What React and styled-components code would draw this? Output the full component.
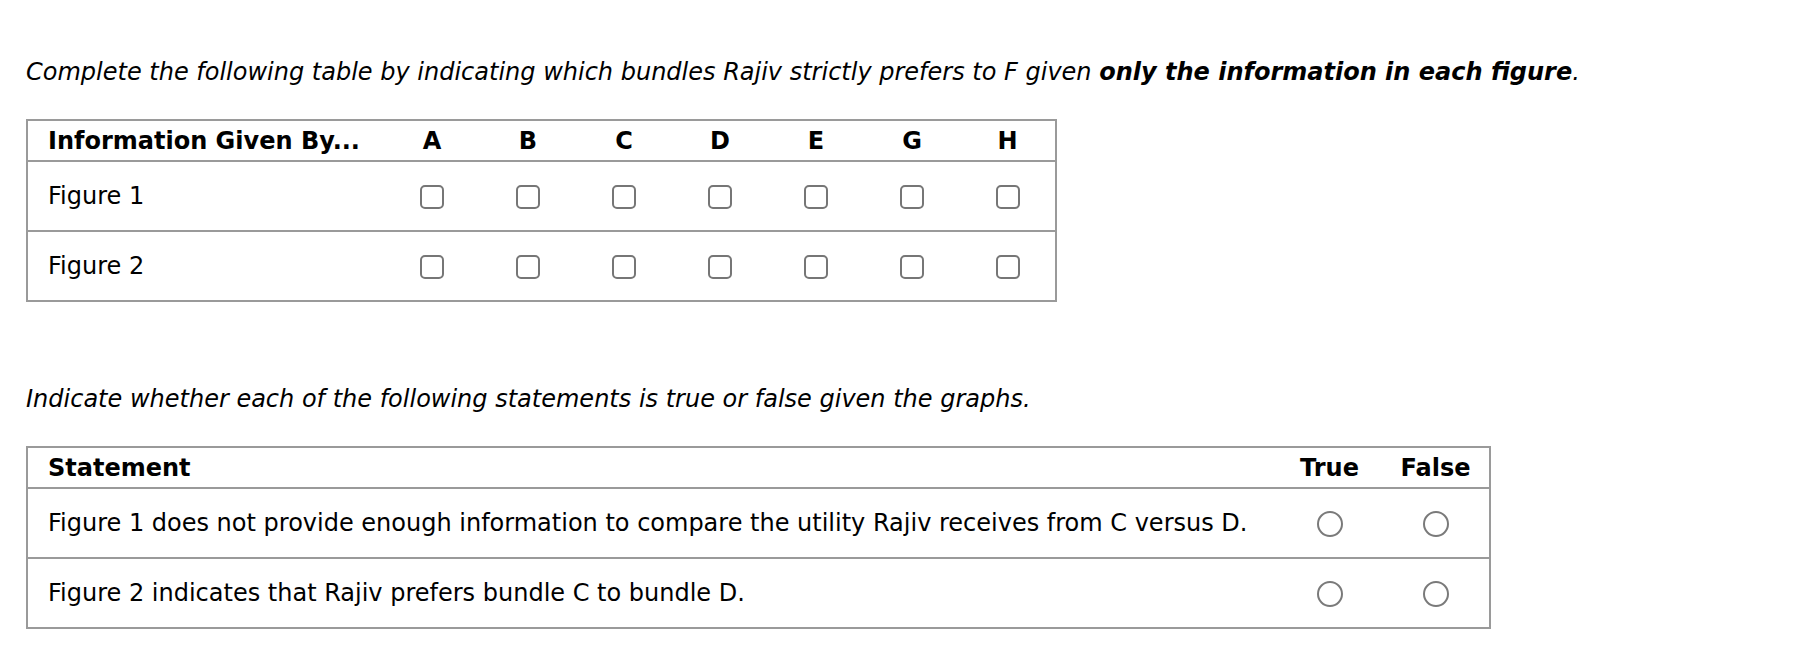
import styled, { createGlobalStyle } from "styled-components";

const GlobalStyle = createGlobalStyle`
  body {
    margin: 0;
    background: #ffffff;
    font-family: "DejaVu Sans", Verdana, sans-serif;
    color: #000000;
  }
`;

const bundles = ["A", "B", "C", "D", "E", "G", "H"];
const figures = ["Figure 1", "Figure 2"];
const statements = [
  "Figure 1 does not provide enough information to compare the utility Rajiv receives from C versus D.",
  "Figure 2 indicates that Rajiv prefers bundle C to bundle D.",
];

const App = () => {
  return (
    <Page>
      <GlobalStyle />
      <Prompt>
        Complete the following table by indicating which bundles Rajiv strictly
        prefers to F given <strong>only the information in each figure</strong>.
      </Prompt>
      <Table>
        <thead>
          <tr>
            <HeadCell $width={357}>Information Given By...</HeadCell>
            {bundles.map((b) => (
              <HeadCell key={b} $center $width={96}>
                {b}
              </HeadCell>
            ))}
          </tr>
        </thead>
        <tbody>
          {figures.map((f) => (
            <tr key={f}>
              <Cell>{f}</Cell>
              {bundles.map((b) => (
                <Cell key={b} $center>
                  <Checkbox type="checkbox" aria-label={`${f} ${b}`} />
                </Cell>
              ))}
            </tr>
          ))}
        </tbody>
      </Table>

      <Prompt $top={81}>
        Indicate whether each of the following statements is true or false given
        the graphs.
      </Prompt>
      <Table>
        <thead>
          <tr>
            <HeadCell $width={1250}>Statement</HeadCell>
            <HeadCell $center $width={105}>True</HeadCell>
            <HeadCell $center $width={108}>False</HeadCell>
          </tr>
        </thead>
        <tbody>
          {statements.map((s, i) => (
            <tr key={i}>
              <Cell>{s}</Cell>
              <Cell $center>
                <Radio type="radio" name={`st${i}`} aria-label="True" />
              </Cell>
              <Cell $center>
                <Radio type="radio" name={`st${i}`} aria-label="False" />
              </Cell>
            </tr>
          ))}
        </tbody>
      </Table>
    </Page>
  );
};

export default App;

const Page = styled.main`
  padding: 56px 26px 30px 26px;
`;

const Prompt = styled.p`
  margin: ${(p) => p.$top || 0}px 0 31px 0;
  font-size: 24px;
  line-height: 32px;
  font-style: italic;

  strong {
    font-weight: bold;
  }
`;

const Table = styled.table`
  border-collapse: collapse;
  border: 2px solid #9a9a9a;
  table-layout: fixed;
  font-size: 24px;
`;

const HeadCell = styled.th`
  width: ${(p) => p.$width}px;
  height: 41px;
  padding: 0 ${(p) => (p.$center ? 0 : 20)}px;
  text-align: ${(p) => (p.$center ? "center" : "left")};
  font-weight: bold;
  border-bottom: 2px solid #9a9a9a;
  box-sizing: border-box;
`;

const Cell = styled.td`
  height: 70px;
  padding: 0 ${(p) => (p.$center ? 0 : 20)}px;
  text-align: ${(p) => (p.$center ? "center" : "left")};
  vertical-align: middle;
  border-bottom: 2px solid #9a9a9a;
  box-sizing: border-box;
`;

const Checkbox = styled.input`
  appearance: none;
  display: inline-block;
  vertical-align: middle;
  margin: 0;
  width: 24px;
  height: 24px;
  border: 2px solid #767676;
  border-radius: 5px;
  background: #ffffff;
  box-sizing: border-box;
`;

const Radio = styled.input`
  appearance: none;
  display: inline-block;
  vertical-align: middle;
  margin: 0;
  width: 26px;
  height: 26px;
  border: 2px solid #7a7a7a;
  border-radius: 50%;
  background: #ffffff;
  box-sizing: border-box;
`;
